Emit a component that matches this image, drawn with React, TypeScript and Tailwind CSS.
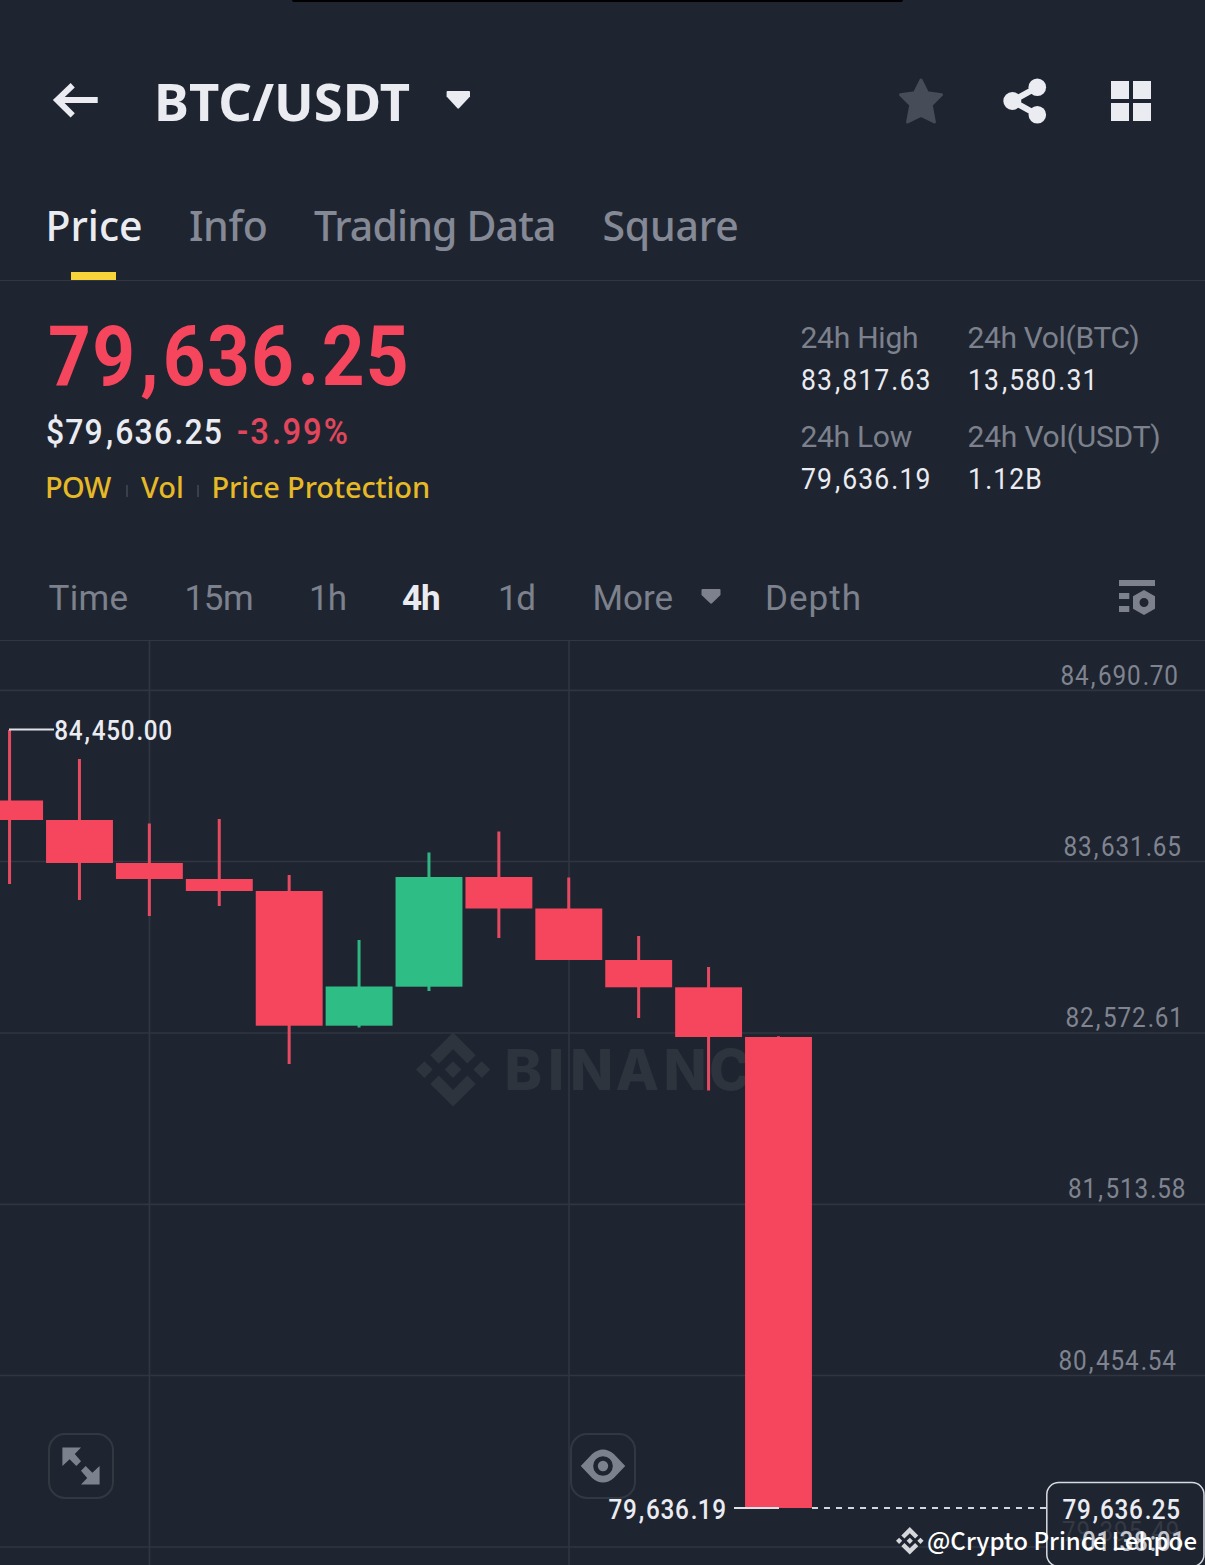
import type { ReactNode } from "react";

const BINANCE_MARK =
  "M16.624 13.9202l2.7175 2.7154-7.353 7.353-7.353-7.352 2.7175-2.7164 4.6355 4.6595 4.6356-4.6595zm4.6366-4.6366L24 12l-2.7154 2.7164L18.5682 12l2.6924-2.7164zm-9.272.001l2.7163 2.6914-2.7164 2.7174v-.001L9.2721 12l2.7164-2.7154zm-9.2722-.001L5.4088 12l-2.6914 2.6924L0 12l2.7164-2.7164zM11.9885.0115l7.353 7.329-2.7174 2.7154-4.6356-4.6356-4.6355 4.6595-2.7174-2.7154 7.353-7.353z";

/* Tabular figure run: condensed digits with roomy punctuation. */
function Figures({ value, className }: { value: string; className: string }) {
  return (
    <span className={`inline-block origin-left scale-x-[0.9] whitespace-nowrap font-['Roboto',sans-serif] ${className}`}>
      {value.split(/([.,])/).map((part, i) =>
        part === "." || part === "," ? (
          <span key={i} className="inline-block w-[0.355em] text-center tracking-normal">
            {part}
          </span>
        ) : (
          part
        ),
      )}
    </span>
  );
}

function Header() {
  return (
    <header className="flex h-[141px] items-center pt-[61px] pr-[47px] pl-[49px]">
      <svg className="size-[54px] shrink-0" viewBox="49 74 54 54" fill="none" stroke="#eaecf2" strokeWidth="6">
        <path d="M97.7 100H57" />
        <path d="M72.7 85.3L57.2 100l15.5 15.3" />
      </svg>
      <h1 className="ml-[51px] w-[284px] pt-px font-['Noto_Sans',sans-serif] text-[52.5px] leading-none font-bold tracking-[0.1px] whitespace-nowrap text-[#eaecf2]">
        BTC/USDT
      </h1>
      <svg className="size-[40px] shrink-0" viewBox="438 81 40 40" fill="#eaecf2">
        <path d="M447.500 91h21.500q1 0 1 1v4.500L459 108.300q-.8.7-1.600 0L446.600 96.500V92q0-1 .9-1z" />
      </svg>
      <div className="ml-auto flex items-center">
        <svg className="size-[54px]" viewBox="894 74 54 54" fill="#474d58" stroke="#474d58" strokeWidth="3" strokeLinejoin="round">
          <path d="M921 80l6.300 12.700 14.200 2-10.300 10.300 3.200 17-13.400-6.500-13.400 6.500 3.200-17-10.300-10.300 14.200-2z" />
        </svg>
        <svg className="ml-[50px] size-[54px]" viewBox="998 74 54 54" fill="#eaecf2">
          <path d="M1037 87.300L1012.300 101l24.700 13.700" fill="none" stroke="#eaecf2" strokeWidth="6" />
          <circle cx="1012.300" cy="101" r="9" />
          <circle cx="1037.300" cy="87.300" r="8.800" />
          <circle cx="1037.300" cy="114.700" r="8.800" />
        </svg>
        <svg className="ml-[52px] size-[54px]" viewBox="1104 74 54 54" fill="#eaecf2">
          <path d="M1111 81h18v18h-18zM1133 81h18v18h-18zM1111 103h18v18h-18zM1133 103h18v18h-18z" />
        </svg>
      </div>
    </header>
  );
}

function Tabs() {
  return (
    <nav className="flex h-[140px] border-b border-[#323842] pt-[59px] pl-[45.5px] font-['Noto_Sans',sans-serif] text-[41px] leading-[50px] font-medium whitespace-nowrap text-[#848995]">
      <div className="relative w-[143.500px] text-[#eaecf2]">
        Price
        <div className="absolute bottom-0 left-[25.5px] h-[8px] w-[45px] bg-[#f8d33a]" />
      </div>
      <div className="w-[125px] tracking-[-0.4px]">Info</div>
      <div className="w-[288.5px] tracking-[-0.85px]">Trading Data</div>
      <div className="tracking-[-0.2px]">Square</div>
    </nav>
  );
}

function Stat({ label, value, spacing }: { label: string; value: string; spacing: string }) {
  return (
    <div className="font-['Roboto',sans-serif]">
      <div className={`text-[30px] leading-9 whitespace-nowrap text-[#7c818d] ${spacing}`}>{label}</div>
      <Figures value={value} className="mt-[6px] text-[29.5px] leading-9 tracking-[0.038em] text-[#eaecf2]" />
    </div>
  );
}

function Summary() {
  return (
    <section className="flex h-[275px] justify-between pt-[34px] pl-[46px]">
      <div>
        <Figures value="79,636.25" className="ml-[1.5px] block text-[83px] leading-[84px] font-bold tracking-[0.017em] text-[#f6465d]" />
        <div className="mt-[13px] flex leading-10">
          <Figures value="$79,636.25" className="w-[191px] text-[35.5px] font-medium tracking-[0.036em] text-[#eaecf2]" />
          <Figures value="-3.99%" className="text-[36.5px] font-medium tracking-[0.06em] text-[#e2465c]" />
        </div>
        <div className="mt-[17px] flex items-center font-['Noto_Sans',sans-serif] text-[29px] leading-9 font-medium whitespace-nowrap text-[#e6b927]">
          <span className="-ml-px w-[81px] tracking-[-0.6px]">POW</span>
          <span className="mt-2 h-3 w-[2px] bg-[#3a404b]" />
          <span className="ml-[13px] w-[56px]">Vol</span>
          <span className="mt-2 h-3 w-[2px] bg-[#3a404b]" />
          <span className="ml-[12.5px] tracking-[-0.1px]">Price Protection</span>
        </div>
      </div>
      <div className="mt-[5px] grid w-[404.5px] grid-cols-[167px_1fr] content-start gap-y-[21px]">
        <Stat label="24h High" value="83,817.63" spacing="tracking-[-0.25px]" />
        <Stat label="24h Vol(BTC)" value="13,580.31" spacing="tracking-[-0.35px]" />
        <Stat label="24h Low" value="79,636.19" spacing="tracking-[-0.3px]" />
        <Stat label="24h Vol(USDT)" value="1.12B" spacing="tracking-[-0.2px]" />
      </div>
    </section>
  );
}

function Intervals() {
  return (
    <nav className="flex h-[85px] items-center border-b border-[#323842] pr-[46px] pl-[48.5px] font-['Roboto',sans-serif] text-[35px] leading-10 whitespace-nowrap text-[#7c818d]">
      <span className="w-[136px] pt-0.5 tracking-[0.3px]">Time</span>
      <span className="w-[124.5px] pt-0.5 tracking-[-0.4px]">15m</span>
      <span className="w-[93px] pt-0.5 tracking-[-1px]">1h</span>
      <span className="w-[96px] pt-0.5 font-bold tracking-[-1px] text-[#eaecf2]">4h</span>
      <span className="w-[94.5px] pt-0.5 tracking-[-1.5px]">1d</span>
      <span className="w-[103.5px] pt-0.5">More</span>
      <svg className="h-[30px] w-[30px]" viewBox="696 583 30 30" fill="#7c818d">
        <path d="M702.500 589h17q1 0 1 1v5L712 603.300q-.9.8-1.800 0L701.500 595v-5q0-1 1-1z" />
      </svg>
      <span className="ml-[39px] pt-0.5 tracking-[1px]">Depth</span>
      <svg className="ml-auto size-[44px]" viewBox="1115 576 44 44" fill="#7c818d">
        <path d="M1119 580h36v6h-36zM1119 593h10.300v6h-10.300zM1119 606h10.300v6h-10.300z" />
        <path fillRule="evenodd" d="M1144 590l11 6.300v12.500l-11 6.200-11-6.200v-12.500zM1144 598a4.500 4.500 0 1 0 0 9 4.500 4.500 0 0 0 0-9z" />
      </svg>
    </nav>
  );
}

type Candle = { high: number; top: number; bottom: number; low: number; up?: boolean };

const candles: Candle[] = [
  { high: 730, top: 800.5, bottom: 820, low: 884 },
  { high: 759, top: 820, bottom: 863, low: 900 },
  { high: 823.5, top: 863, bottom: 879, low: 916 },
  { high: 819, top: 879, bottom: 891, low: 906 },
  { high: 875, top: 891, bottom: 1025.7, low: 1064 },
  { high: 940, top: 986.5, bottom: 1025.7, low: 1027.5, up: true },
  { high: 852.5, top: 877, bottom: 986.7, low: 991, up: true },
  { high: 831.5, top: 877, bottom: 908.5, low: 938 },
  { high: 877.5, top: 908.5, bottom: 960, low: 960 },
  { high: 936, top: 960, bottom: 987.3, low: 1018 },
  { high: 967, top: 987.3, bottom: 1037, low: 1090.5 },
  { high: 1036.3, top: 1037, bottom: 1508, low: 1508 },
];

const gridRows = [690.3, 861.5, 1033, 1204.3, 1375.5, 1547];
const gridColumns = [149.5, 569];

const axisLabels = [
  { value: "84,690.70", x: 1060.5, y: 685.2 },
  { value: "83,631.65", x: 1063.5, y: 856.2 },
  { value: "82,572.61", x: 1065.5, y: 1027.2 },
  { value: "81,513.58", x: 1068, y: 1198.2 },
  { value: "80,454.54", x: 1058.5, y: 1370 },
];

/* Chart figure with a fixed pitch for digits and a narrower one for punctuation. */
function ChartFigure({ value, x, y, fill, bold }: { value: string; x: number; y: number; fill: string; bold?: boolean }) {
  let cursor = 0;
  const stops = [...value].map((ch) => {
    const narrow = /[.,:]/.test(ch);
    const at = cursor + (narrow ? 1.4 : 0);
    cursor += narrow ? 9.4 : 16.1;
    return at;
  });
  return (
    <text
      transform={`translate(${x} ${y}) scale(0.9 1)`}
      x={stops.join(" ")}
      fontSize="27"
      fill={fill}
      className={bold ? "font-['Roboto',sans-serif] font-medium" : "font-['Roboto',sans-serif]"}
    >
      {value}
    </text>
  );
}

function OverlayButton({ className, children }: { className: string; children: ReactNode }) {
  return (
    <button className={`absolute top-[792px] size-[66px] rounded-[17px] border-[2.5px] border-[#323842] ${className}`}>
      <svg className="size-full" viewBox="0 0 60 60" fill="#7c818e">
        {children}
      </svg>
    </button>
  );
}

function Chart() {
  return (
    <main className="relative h-[924px] overflow-hidden">
      <svg className="block h-[924px] w-[1205px]" viewBox="0 641 1205 924">
        <g stroke="#303640" strokeWidth="1.7">
          {gridRows.map((y) => (
            <path key={y} d={`M0 ${y}H1205`} />
          ))}
          {gridColumns.map((x) => (
            <path key={x} d={`M${x} 641V1565`} />
          ))}
        </g>

        <g fill="#2e343e">
          <path transform="translate(416 1032.500) scale(3.090)" d={BINANCE_MARK} />
          <text x="504.500 548 570 615.500 663.500 709" y="1090" fontSize="56.500" className="font-['Inter',sans-serif] font-extrabold">
            BINANC
          </text>
        </g>

        {axisLabels.map((l) => (
          <ChartFigure key={l.value} {...l} fill="#7f8490" />
        ))}

        {candles.map((c, i) => {
          const cx = 9.55 + 69.9 * i;
          return (
            <g key={i}>
              <rect x={cx - 1.5} y={c.high} width="3" height={c.low - c.high} fill={c.up ? "#2fb683" : "#e64a60"} />
              <rect x={cx - 33.4} y={c.top} width="66.900" height={c.bottom - c.top} fill={c.up ? "#2ebd85" : "#f6465d"} />
            </g>
          );
        })}

        <path d="M9 729.500H54M734 1508H779" stroke="#dfe1e8" strokeWidth="1.800" />
        <ChartFigure value="84,450.00" x={54.3} y={740} fill="#eaecf2" bold />
        <ChartFigure value="79,636.19" x={608.5} y={1518.7} fill="#eaecf2" bold />
        <path d="M812 1508H1046" stroke="#d3d6de" strokeWidth="1.800" strokeDasharray="6 6" />

        <rect x="1046.800" y="1482.500" width="157.200" height="84" rx="12" fill="#1f2530" stroke="#d9dbe2" strokeWidth="1.500" />
        <ChartFigure value="79,395.49" x={1062} y={1541} fill="#343943" />
        <ChartFigure value="79,636.25" x={1062.5} y={1518.7} fill="#eaecf2" bold />
        <ChartFigure value="01:38:01" x={1082} y={1551} fill="#c3c6cf" bold />

        <path transform="translate(896 1527) scale(1.150)" d={BINANCE_MARK} fill="#d6d7db" />
        <text x="927" y="1550" fontSize="24" textLength="270" className="font-['Noto_Sans_CJK_SC',sans-serif] font-medium" fill="#ffffff">
          @Crypto Prince Lehpoe
        </text>
      </svg>

      <OverlayButton className="left-[48px]">
        <path d="M12 12h18l-6 6.500 6 7-4.500 4.500-6.500-6.500-7 6.500zM48 48H30l6-6.500-6-7 4.500-4.500 6.500 6.500 7-6.500z" />
      </OverlayButton>
      <OverlayButton className="left-[570px]">
        <path
          fillRule="evenodd"
          d="M8.500 30L19.500 18.500Q30 9.500 40.500 18.500L51.500 30 40.500 41.500Q30 50.500 19.500 41.500zM30 20.500a9.500 9.500 0 1 0 0 19 9.500 9.500 0 0 0 0-19z"
        />
        <circle cx="30" cy="30" r="5" />
      </OverlayButton>
    </main>
  );
}

export default function App() {
  return (
    <div className="relative h-[1565px] w-[1205px] overflow-hidden bg-[#1f2530]">
      <div className="absolute top-0 left-[292px] h-[1.5px] w-[611px] rounded-b-full bg-black" />
      <Header />
      <Tabs />
      <Summary />
      <Intervals />
      <Chart />
    </div>
  );
}
